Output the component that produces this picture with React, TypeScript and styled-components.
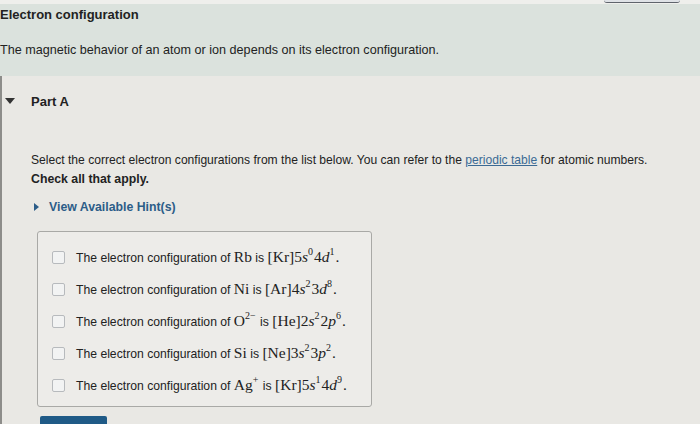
import React from 'react';
import styled, { createGlobalStyle } from 'styled-components';

const GlobalStyle = createGlobalStyle`
  html, body {
    margin: 0;
    padding: 0;
    background: #e8e7e3;
  }
  body {
    font-family: "Liberation Sans", Arial, sans-serif;
    color: #222;
  }
`;

const Page = styled.div`
  width: 700px;
  height: 424px;
  overflow: hidden;
  display: flex;
  flex-direction: column;
  background: #e9e8e4;
  & > * {
    flex-shrink: 0;
  }
`;

const TopStrip = styled.div`
  height: 4px;
  display: flex;
  justify-content: flex-end;
  background: #efefec;
  padding-right: 20px;
`;

const TopButton = styled.div`
  width: 76px;
  height: 2px;
  background: #dfe2e6;
  border-bottom: 1px solid #5f646c;
  border-radius: 0 0 3px 3px;
`;

const Header = styled.div`
  background: #dbe2dd;
  height: 72px;
  padding-top: 2px;
  display: flex;
  flex-direction: column;
  box-sizing: border-box;
`;

const Title = styled.div`
  font-weight: bold;
  font-size: 13px;
  line-height: 18px;
`;

const Desc = styled.div`
  margin-top: 17px;
  font-size: 12.6px;
  line-height: 18px;
`;

const Body = styled.div`
  flex: 1;
  min-height: 0;
  overflow: hidden;
  border-left: 2px solid #8d8d8a;
  display: flex;
  flex-direction: column;
  padding-top: 16px;
  & > * {
    flex-shrink: 0;
  }
`;

const PartRow = styled.div`
  display: flex;
  align-items: center;
  height: 18px;
  gap: 16px;
  padding-left: 3px;
`;

const Caret = styled.span<{ $dir: 'down' | 'right'; $color: string }>`
  display: inline-block;
  width: 0;
  height: 0;
  ${({ $dir, $color }) =>
    $dir === 'down'
      ? `border-left: 5px solid transparent; border-right: 5px solid transparent; border-top: 6px solid ${$color};`
      : `border-top: 4.5px solid transparent; border-bottom: 4.5px solid transparent; border-left: 5px solid ${$color};`}
`;

const PartTitle = styled.span`
  font-weight: bold;
  font-size: 13px;
`;

const Content = styled.div`
  padding-left: 29px;
  display: flex;
  flex-direction: column;
  & > * {
    flex-shrink: 0;
  }
`;

const Prompt = styled.div`
  margin-top: 41px;
  font-size: 12.1px;
  line-height: 18px;
`;

const Link = styled.span`
  color: #3b6a94;
  text-decoration: underline;
`;

const CheckAll = styled.div`
  margin-top: 1px;
  font-weight: bold;
  font-size: 12.3px;
  line-height: 18px;
`;

const HintRow = styled.div`
  margin-top: 10px;
  display: flex;
  align-items: center;
  gap: 10px;
  height: 18px;
  padding-left: 3px;
  color: #2c5d88;
  font-weight: bold;
  font-size: 12.3px;
`;

const OptionBox = styled.div`
  margin-top: 15px;
  margin-left: 6px;
  width: 335px;
  box-sizing: border-box;
  border: 1px solid #a9a9a6;
  border-radius: 3px;
  background: #edece9;
  padding: 9px 0 5px 14px;
  display: flex;
  flex-direction: column;
`;

const Option = styled.label`
  height: 32px;
  display: flex;
  align-items: center;
  gap: 11px;
  font-size: 12.2px;
  white-space: nowrap;
`;

const Box = styled.span`
  width: 11px;
  height: 11px;
  border: 1px solid #b7babd;
  border-radius: 2px;
  background: #f2f3f3;
  flex-shrink: 0;
`;

const M = styled.span`
  font-family: "Liberation Serif", "Times New Roman", serif;
  font-size: 15.5px;
`;

const V = styled.i`
  font-family: "Liberation Serif", "Times New Roman", serif;
  font-size: 15.5px;
`;

const Sup = styled.sup`
  font-family: "Liberation Serif", "Times New Roman", serif;
  font-size: 10px;
  line-height: 0;
  vertical-align: 7px;
  margin-right: 1px;
`;

const Submit = styled.div`
  margin-top: 9px;
  margin-left: 9px;
  width: 67px;
  height: 20px;
  background: #1f5a86;
  border-radius: 2px;
`;

const Cfg: React.FC<{ core: string; parts: [string, string, string][] }> = ({ core, parts }) => (
  <>
    <M>[{core}]</M>
    {parts.map(([n, l, e], i) => (
      <React.Fragment key={i}>
        <M>{n}</M>
        <V>{l}</V>
        <Sup>{e}</Sup>
      </React.Fragment>
    ))}
    <M>.</M>
  </>
);

const options: { el: React.ReactNode; core: string; parts: [string, string, string][] }[] = [
  { el: <M>Rb</M>, core: 'Kr', parts: [['5', 's', '0'], ['4', 'd', '1']] },
  { el: <M>Ni</M>, core: 'Ar', parts: [['4', 's', '2'], ['3', 'd', '8']] },
  { el: <><M>O</M><Sup>2−</Sup> </>, core: 'He', parts: [['2', 's', '2'], ['2', 'p', '6']] },
  { el: <M>Si</M>, core: 'Ne', parts: [['3', 's', '2'], ['3', 'p', '2']] },
  { el: <><M>Ag</M><Sup>+</Sup> </>, core: 'Kr', parts: [['5', 's', '1'], ['4', 'd', '9']] },
];

export default function App() {
  return (
    <Page>
      <GlobalStyle />
      <TopStrip>
        <TopButton />
      </TopStrip>
      <Header>
        <Title>Electron configuration</Title>
        <Desc>The magnetic behavior of an atom or ion depends on its electron configuration.</Desc>
      </Header>
      <Body>
        <PartRow>
          <Caret $dir="down" $color="#333" />
          <PartTitle>Part A</PartTitle>
        </PartRow>
        <Content>
          <Prompt>
            Select the correct electron configurations from the list below. You can refer to the{' '}
            <Link>periodic table</Link> for atomic numbers.
          </Prompt>
          <CheckAll>Check all that apply.</CheckAll>
          <HintRow>
            <Caret $dir="right" $color="#2c5d88" />
            View Available Hint(s)
          </HintRow>
          <OptionBox>
            {options.map((o, i) => (
              <Option key={i}>
                <Box />
                <span>
                  The electron configuration of {o.el} is <Cfg core={o.core} parts={o.parts} />
                </span>
              </Option>
            ))}
          </OptionBox>
          <Submit />
        </Content>
      </Body>
    </Page>
  );
}
